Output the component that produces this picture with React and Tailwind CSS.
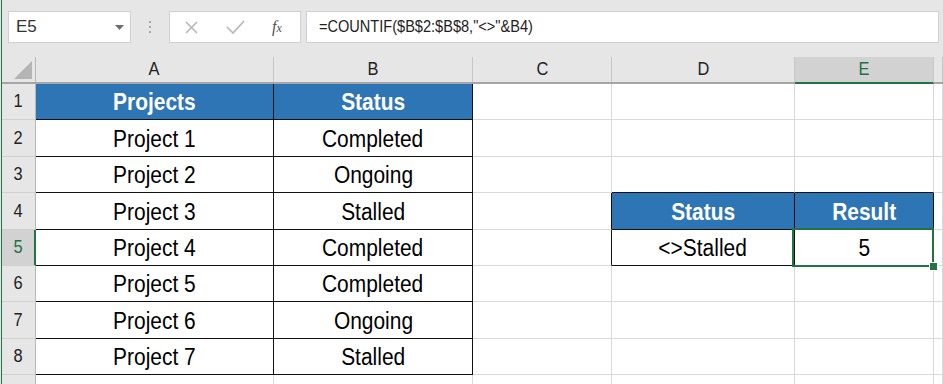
import React from 'react';

const cols = [
  { key: 'A', w: 'w-[238px]' },
  { key: 'B', w: 'w-[199px]' },
  { key: 'C', w: 'w-[139px]' },
  { key: 'D', w: 'w-[183px]' },
  { key: 'E', w: 'w-[139px]' },
  { key: 'F', w: 'flex-1' },
];

const rowHeights = ['h-[36px]', 'h-[37px]', 'h-[36px]', 'h-[37px]', 'h-[36px]', 'h-[36px]', 'h-[37px]', 'h-[36px]', 'h-[12px]'];

const values = {
  A1: 'Projects', B1: 'Status',
  A2: 'Project 1', B2: 'Completed',
  A3: 'Project 2', B3: 'Ongoing',
  A4: 'Project 3', B4: 'Stalled',
  A5: 'Project 4', B5: 'Completed',
  A6: 'Project 5', B6: 'Completed',
  A7: 'Project 6', B7: 'Ongoing',
  A8: 'Project 7', B8: 'Stalled',
  D4: 'Status', E4: 'Result',
  D5: '<>Stalled', E5: '5',
};

const blue = ['A1', 'B1', 'D4', 'E4'];

function inMain(c, r) {
  return (c === 'A' || c === 'B') && r >= 1 && r <= 8;
}
function inSide(c, r) {
  return (c === 'D' || c === 'E') && (r === 4 || r === 5);
}

function Cell({ c, r }) {
  const id = c + r;
  const rightBlack = inMain(c, r) || inSide(c, r) || (c === 'C' && (r === 4 || r === 5));
  const bottomBlack = inMain(c, r) || ((c === 'D' || c === 'E') && r >= 3 && r <= 5);
  const isBlue = blue.includes(id);
  const col = cols.find((x) => x.key === c);
  return (
    <div
      className={`${col.w} shrink-0 border-r border-b flex items-center justify-center text-[23px] leading-none ${
        rightBlack ? 'border-r-[#111]' : 'border-r-[#d9d9d9]'
      } ${bottomBlack ? 'border-b-[#111]' : 'border-b-[#d9d9d9]'} ${
        isBlue ? 'bg-[#2e75b6] text-white font-bold' : 'bg-white text-black'
      }`}
    >
      {values[id] && <span className="inline-block pt-[2px] scale-x-91 whitespace-nowrap">{values[id]}</span>}
    </div>
  );
}

export default function App() {
  return (
    <div className="w-[943px] h-[384px] overflow-hidden flex bg-[#e6e6e6] font-['Liberation_Sans',Arial,sans-serif]">
      <div className="w-px bg-[#e6e6e6]" />
      <div className="w-px bg-[#217346]" />
      <div className="flex-1 flex flex-col relative">
        {/* formula bar */}
        <div className="h-[57px] flex items-start pt-[11px] shrink-0">
          <div className="ml-[6px] w-[123px] h-[32px] bg-white border border-[#d0d0d0] flex items-center justify-between pl-[7px] pr-[6px]">
            <span className="text-[17px] text-[#333]">E5</span>
            <svg width="9" height="5" viewBox="0 0 9 5">
              <path d="M0 0 L9 0 L4.5 5 Z" fill="#6d6d6d" />
            </svg>
          </div>
          <div className="w-[38px] h-[32px] flex flex-col items-center justify-center gap-[3px]">
            <div className="w-[2px] h-[2px] bg-[#a8a8a8]" />
            <div className="w-[2px] h-[2px] bg-[#a8a8a8]" />
            <div className="w-[2px] h-[2px] bg-[#a8a8a8]" />
          </div>
          <div className="w-[132px] h-[32px] bg-white border border-[#d0d0d0] flex items-center">
            <svg className="ml-[15px]" width="13" height="13" viewBox="0 0 13 13">
              <path d="M1 1 L12 12 M12 1 L1 12" stroke="#b5b5b5" strokeWidth="1.5" fill="none" />
            </svg>
            <svg className="ml-[28px]" width="19" height="14" viewBox="0 0 19 14">
              <path d="M1 7 L7 13 L18 1" stroke="#b5b5b5" strokeWidth="1.6" fill="none" />
            </svg>
            <span className="ml-[27px] font-['Liberation_Serif',serif] italic text-[#505050] text-[16px] leading-none">
              f<span className="text-[12px]">x</span>
            </span>
          </div>
          <div className="ml-[5px] w-[633px] h-[32px] bg-white border border-[#d0d0d0] flex items-center pl-[12px]">
            <span className="inline-block origin-left scale-x-91 text-[16px] text-[#222] whitespace-nowrap">=COUNTIF($B$2:$B$8,"&lt;&gt;"&amp;B4)</span>
          </div>
        </div>

        {/* column headers */}
        <div className="h-[27px] flex shrink-0 border-b-2 border-b-[#a6a6a6]">
          <div className="w-[34px] shrink-0 border-r border-r-[#b8b8b8] flex items-end justify-end pr-[3px] pb-[3px]">
            <svg width="18" height="18" viewBox="0 0 18 18">
              <path d="M18 0 L18 18 L0 18 Z" fill="#b4b4b4" />
            </svg>
          </div>
          {cols.map((c) => (
            <div
              key={c.key}
              className={`${c.w} shrink-0 flex items-center justify-center text-[18px] ${
                c.key === 'E'
                  ? 'bg-[#d2d2d2] text-[#217346] border-r border-r-[#c6c6c6] border-b-2 border-b-[#217346] -mb-[2px]'
                  : 'text-[#222] border-r border-r-[#c6c6c6]'
              }`}
            >
              <span className="inline-block scale-x-91">{c.key === 'F' ? '' : c.key}</span>
            </div>
          ))}
        </div>

        {/* rows */}
        {rowHeights.map((h, i) => {
          const r = i + 1;
          const sel = r === 5;
          return (
            <div key={r} className={`${h} flex shrink-0`}>
              <div
                className={`w-[34px] shrink-0 flex items-center justify-center text-[18px] border-b border-b-[#d0d0d0] ${
                  sel
                    ? 'bg-[#d2d2d2] text-[#217346] border-r-2 border-r-[#217346]'
                    : 'bg-[#e6e6e6] text-[#222] border-r border-r-[#b8b8b8]'
                }`}
              >
                <span className="inline-block scale-x-91">{r < 9 ? r : ''}</span>
              </div>
              {cols.map((c) => (
                <Cell key={c.key} c={c.key} r={r} />
              ))}
            </div>
          );
        })}

        {/* active cell E5 */}
        <div className="absolute left-[790px] top-[228px] w-[142px] h-[39px] border-2 border-[#217346]" />
        <div className="absolute left-[928px] top-[263px] w-[7px] h-[7px] bg-[#217346] outline outline-1 outline-white" />
      </div>
    </div>
  );
}
